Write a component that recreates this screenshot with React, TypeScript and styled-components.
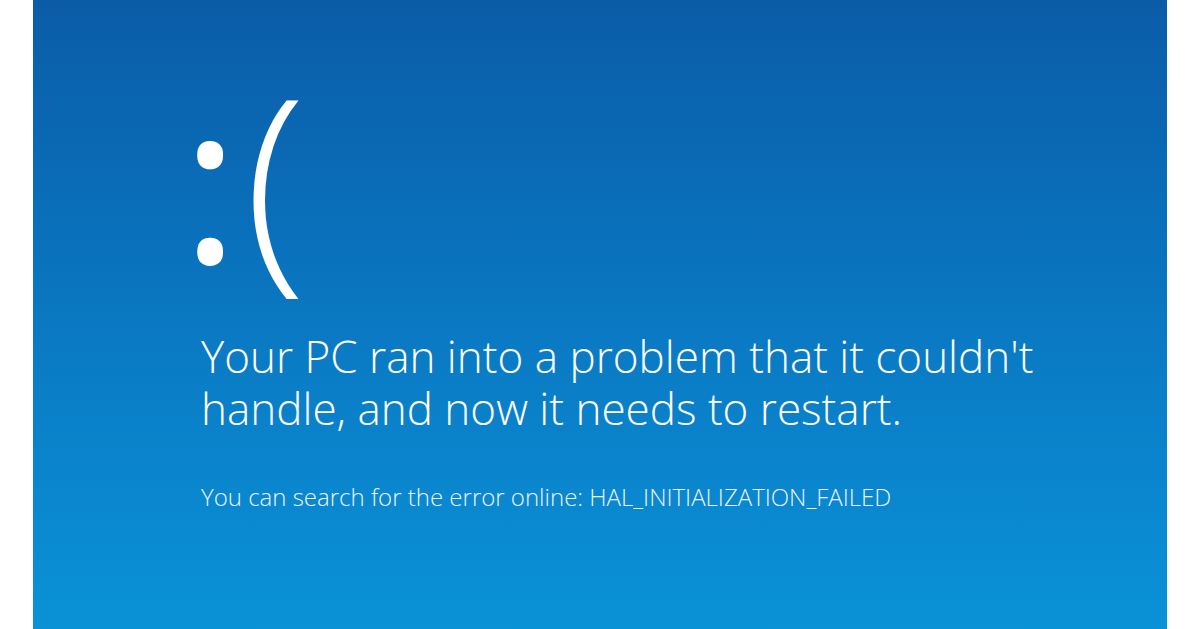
import styled, { createGlobalStyle } from 'styled-components';

const GlobalStyle = createGlobalStyle`
  html, body {
    margin: 0;
    padding: 0;
    background: #ffffff;
  }
`;

const Page = styled.div`
  width: 1200px;
  height: 629px;
  padding: 0 33px;
  box-sizing: border-box;
  background: #ffffff;
  overflow: hidden;
`;

const Screen = styled.main`
  height: 100%;
  background: linear-gradient(180deg, #0b5ca7 0%, #0a6fba 35%, #0a80c9 65%, #0a92d6 100%);
  display: flex;
  flex-direction: column;
  padding: 62px 0 0 168px;
  box-sizing: border-box;
  color: #ffffff;
  font-family: 'Open Sans', 'Segoe UI', 'Liberation Sans', sans-serif;
  font-weight: 300;
`;

const Frown = styled.div`
  height: 268px;
  font-size: 227px;
  line-height: 227px;
  white-space: nowrap;
`;

const Eyes = styled.span`
  font-size: 222px;
  font-weight: 380;
  margin-left: -20px;
`;

const Mouth = styled.span`
  margin-left: 5px;
`;

const Headline = styled.h1`
  margin: 0;
  font-size: 44px;
  font-weight: 300;
  line-height: 52px;
`;

const Detail = styled.p`
  margin: 49px 0 0;
  font-size: 24px;
  line-height: 28px;
  opacity: 0.92;
`;

const App = () => {
  return (
    <>
      <GlobalStyle />
      <Page>
        <Screen>
          <Frown>
            <Eyes>:</Eyes>
            <Mouth>(</Mouth>
          </Frown>
          <Headline>
            Your PC ran into a problem that it couldn't
            <br />
            handle, and now it needs to restart.
          </Headline>
          <Detail>You can search for the error online: HAL_INITIALIZATION_FAILED</Detail>
        </Screen>
      </Page>
    </>
  );
};

export default App;
